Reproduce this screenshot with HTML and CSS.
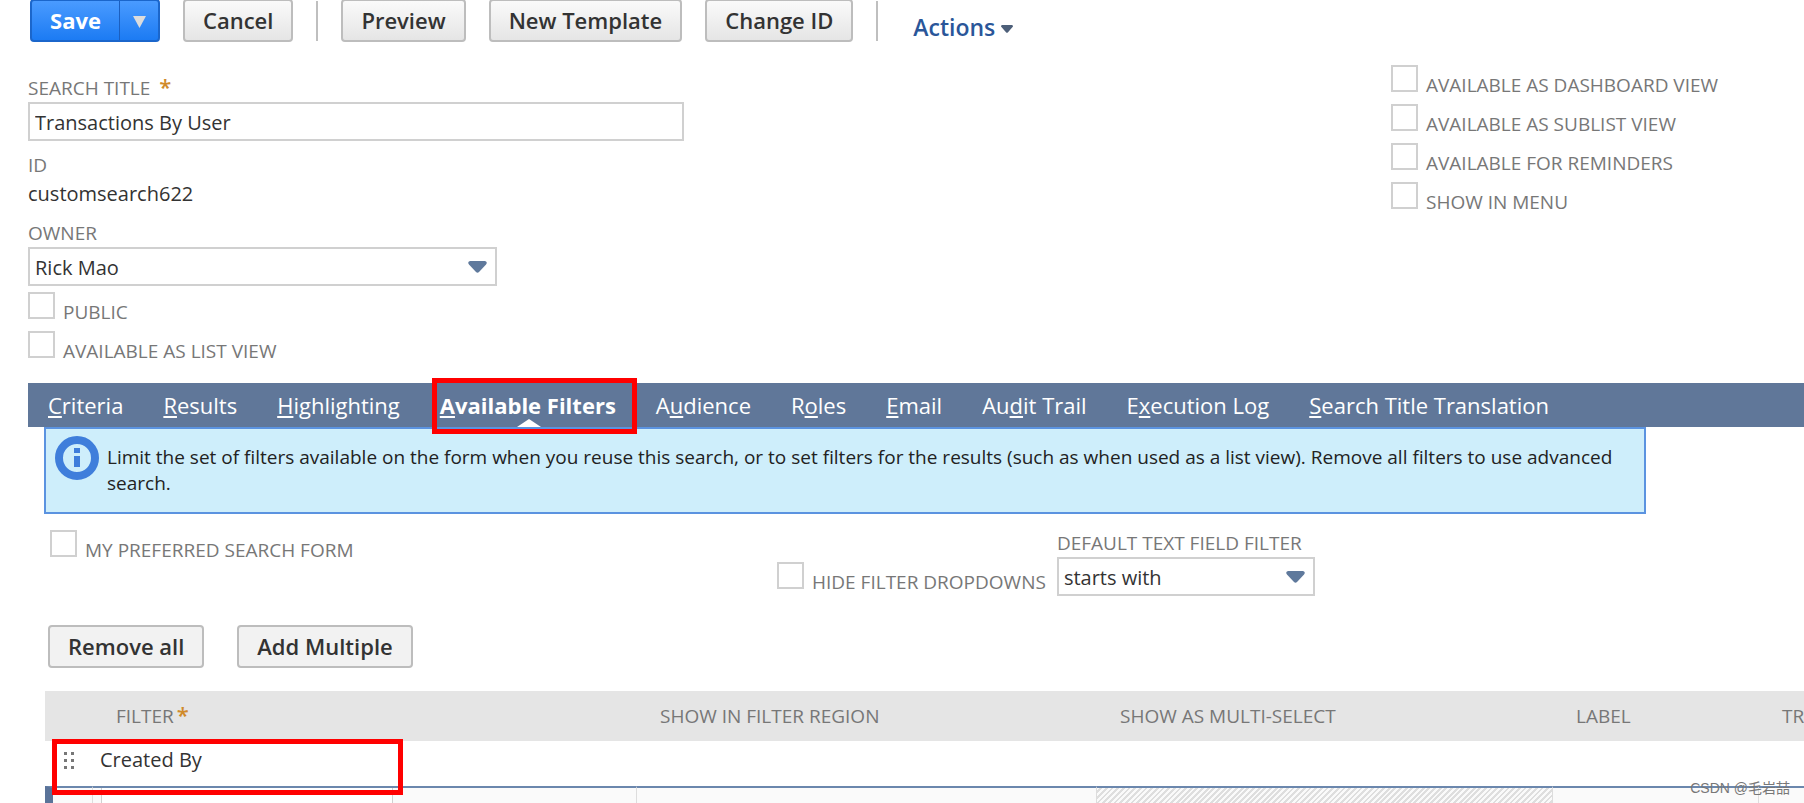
FILE: index.html
```html
<!DOCTYPE html>
<html lang="en">
<head>
    <meta charset="UTF-8">
    <meta name="viewport" content="width=device-width, initial-scale=1.0">
    <title>Saved Transaction Search</title>
    <link rel="stylesheet" href="styles.css">
</head>
<body>
    <header class="toolbar">
        <div class="split">
            <button class="btn-save" type="button">Save</button>
            <button class="btn-more" type="button" aria-label="More save options">
                <svg width="13" height="14" viewBox="0 0 13 14"><path d="M0 1h13L6.500 13z" fill="#dcdcdc"/></svg>
            </button>
        </div>
        <button class="btn" type="button">Cancel</button>
        <span class="divider"></span>
        <button class="btn" type="button">Preview</button>
        <button class="btn" type="button">New Template</button>
        <button class="btn" type="button">Change ID</button>
        <span class="divider"></span>
        <a class="actions" href="#">Actions
            <svg width="12" height="8" viewBox="0 0 12 8"><path d="M1 0h10q1 0 1 1.500L6.800 7.400q-.8.8-1.600 0L0 1.500Q0 0 1 0z" fill="#4d5f79"/></svg>
        </a>
    </header>

    <main>
        <section class="fields">
            <div class="fields-left">
                <label class="label" for="title">SEARCH TITLE <span class="required title-star">*</span></label>
                <input class="box" type="text" id="title" value="Transactions By User">
                <div class="field">
                    <div class="label">ID</div>
                    <div class="value">customsearch622</div>
                </div>
                <div class="field">
                    <label class="label" for="owner">OWNER</label>
                    <div class="select owner">
                        <select class="box" id="owner"><option>Rick Mao</option></select>
                        <svg class="caret" width="19" height="12" viewBox="0 0 19 12"><path d="M2 0h15q3 1 1 3.500L11 11q-1.500 1.500-3 0L1 3.500Q-1 1 2 0z" fill="#5f799c"/></svg>
                    </div>
                </div>
                <div class="checks checks-left">
                    <div class="check"><input type="checkbox" id="public"><label for="public">PUBLIC</label></div>
                    <div class="check"><input type="checkbox" id="listview"><label for="listview">AVAILABLE AS LIST VIEW</label></div>
                </div>
            </div>
            <div class="checks">
                <div class="check"><input type="checkbox" id="dashboard"><label for="dashboard">AVAILABLE AS DASHBOARD VIEW</label></div>
                <div class="check"><input type="checkbox" id="sublist"><label for="sublist">AVAILABLE AS SUBLIST VIEW</label></div>
                <div class="check"><input type="checkbox" id="reminders"><label for="reminders">AVAILABLE FOR REMINDERS</label></div>
                <div class="check"><input type="checkbox" id="menu"><label for="menu">SHOW IN MENU</label></div>
            </div>
        </section>

        <nav class="tabs">
            <a href="#"><u>C</u>riteria</a>
            <a href="#"><u>R</u>esults</a>
            <a href="#"><u>H</u>ighlighting</a>
            <a class="active" href="#"><u>A</u>vailable Filters</a>
            <a href="#">A<u>u</u>dience</a>
            <a href="#">R<u>o</u>les</a>
            <a href="#"><u>E</u>mail</a>
            <a href="#">Au<u>d</u>it Trail</a>
            <a href="#">E<u>x</u>ecution Log</a>
            <a href="#"><u>S</u>earch Title Translation</a>
        </nav>

        <section class="panel">
            <div class="info">
                <svg class="info-icon" width="44" height="44" viewBox="0 0 44 44">
                    <circle cx="22" cy="22" r="18" fill="none" stroke="#3f7edb" stroke-width="8"/>
                    <path d="M19 12h6v5h-6zM19 20h6v11h-6z" fill="#3f7edb"/>
                </svg>
                <p>Limit the set of filters available on the form when you reuse this search, or to set filters for the results (such as when used as a list view). Remove all filters to use advanced search.</p>
            </div>

            <div class="options">
                <div class="check preferred"><input type="checkbox" id="preferred"><label for="preferred">MY PREFERRED SEARCH FORM</label></div>
                <div class="check hide"><input type="checkbox" id="hide"><label for="hide">HIDE FILTER DROPDOWNS</label></div>
                <div>
                    <label class="label" for="textfilter">DEFAULT TEXT FIELD FILTER</label>
                    <div class="select textfilter">
                        <select class="box" id="textfilter"><option>starts with</option></select>
                        <svg class="caret" width="19" height="12" viewBox="0 0 19 12"><path d="M2 0h15q3 1 1 3.500L11 11q-1.500 1.500-3 0L1 3.500Q-1 1 2 0z" fill="#5f799c"/></svg>
                    </div>
                </div>
            </div>

            <div class="list-buttons">
                <button class="btn flat" type="button">Remove all</button>
                <button class="btn flat" type="button">Add Multiple</button>
            </div>

            <table class="filters">
                <colgroup>
                    <col class="col-drag"><col class="col-filter"><col class="col-region"><col class="col-multi"><col class="col-label"><col>
                </colgroup>
                <thead>
                    <tr>
                        <th></th>
                        <th>FILTER<span class="required">*</span></th>
                        <th>SHOW IN FILTER REGION</th>
                        <th>SHOW AS MULTI-SELECT</th>
                        <th>LABEL</th>
                        <th>TR</th>
                    </tr>
                </thead>
                <tbody>
                    <tr class="row">
                        <td class="drag">
                            <svg width="11" height="18" viewBox="0 0 11 18" fill="#777"><path d="M0 0h3v3H0zM7 0h3v3H7zM0 7h3v3H0zM7 7h3v3H7zM0 14h3v3H0zM7 14h3v3H7z"/></svg>
                        </td>
                        <td>Created By<span class="mark-row"></span></td>
                        <td></td>
                        <td></td>
                        <td></td>
                        <td></td>
                    </tr>
                    <tr class="edit">
                        <td class="handle"></td>
                        <td><input type="text" aria-label="Filter"></td>
                        <td></td>
                        <td class="disabled"></td>
                        <td></td>
                        <td></td>
                    </tr>
                </tbody>
            </table>
        </section>
    </main>
    <div class="watermark">CSDN @毛岩喆</div>
</body>
</html>
```
FILE: styles.css
```css
* {
    margin: 0;
    padding: 0;
    box-sizing: border-box;
}
body {
    font-family: "Open Sans", "Noto Sans CJK SC", sans-serif;
    font-size: 19px;
    color: #333;
    background: #fff;
    height: 100vh;
    overflow: hidden;
    position: relative;
}
button, input, select {
    font-family: inherit;
}
main {
    padding-left: 28px;
}

/* toolbar */
.toolbar {
    display: flex;
    margin-top: -1px;
    padding-left: 30px;
    gap: 23px;
}
.split {
    display: flex;
    height: 43px;
    border: 2px solid #1b66cb;
    border-radius: 4px;
    background: linear-gradient(#4a9bff, #1c7bf3);
}
.btn-save, .btn-more {
    border: none;
    background: none;
    color: #fff;
    font-size: 22px;
    font-weight: 700;
    line-height: 39px;
}
.btn-save {
    width: 87px;
}
.btn-more {
    width: 39px;
    border-left: 1px solid #1b5fc0;
}
.btn {
    height: 43px;
    padding: 0 18px;
    border: 2px solid #bdbdbd;
    border-radius: 4px;
    background: linear-gradient(#fafafa, #e5e5e5);
    color: #333;
    font-size: 22px;
    font-weight: 600;
    line-height: 39px;
}
.flat {
    background: #f2f2f2;
}
.divider {
    width: 2px;
    height: 40px;
    margin-top: 2px;
    background: #bfbfbf;
}
.actions {
    margin-left: 12px;
    color: #2a5699;
    font-size: 23px;
    font-weight: 600;
    line-height: 56px;
    height: 43px;
    text-decoration: none;
}
.actions svg {
    vertical-align: 3px;
}

/* fields */
.fields {
    display: grid;
    grid-template-columns: 33fr 10fr;
    margin-top: 23px;
}
.fields-left {
    width: 656px;
    padding-top: 10px;
}
.label {
    display: block;
    line-height: 27px;
    color: #777;
    white-space: nowrap;
}
.required {
    color: #d08a2a;
    font-size: 22px;
    font-weight: 600;
    line-height: 20px;
}
.title-star {
    margin-left: 4px;
}
.box {
    display: block;
    width: 100%;
    height: 39px;
    padding: 2px 5px 0;
    border: 2px solid #d0d0d0;
    border-radius: 0;
    background: #fff;
    color: #333;
    font-size: 20px;
    appearance: none;
}
.field {
    margin-top: 11px;
}
.value {
    font-size: 20px;
    line-height: 30px;
}
.select {
    position: relative;
}
.caret {
    position: absolute;
    right: 10px;
    top: 14px;
}
.owner {
    width: 469px;
}
.checks {
    display: flex;
    flex-direction: column;
    gap: 6px;
}
.checks-left {
    margin-top: 6px;
}
.check {
    display: flex;
    align-items: baseline;
    gap: 8px;
    height: 33px;
    color: #777;
    line-height: 26px;
    white-space: nowrap;
}
.check input {
    appearance: none;
    width: 27px;
    height: 27px;
    border: 2px solid #d0d0d0;
    background: #fff;
}

/* tabs */
.tabs {
    display: flex;
    gap: 40px;
    height: 44px;
    margin-top: 19px;
    padding-left: 20px;
    background: #607799;
}
.tabs a {
    position: relative;
    color: #fff;
    font-size: 22px;
    line-height: 45px;
    text-decoration: none;
    white-space: nowrap;
}
.tabs .active {
    font-weight: 700;
}
/* pointer under the open tab */
.active::before {
    content: "";
    position: absolute;
    left: 50%;
    bottom: 0;
    margin-left: -11px;
    border: 12px solid transparent;
    border-top: none;
    border-bottom: 8px solid #fff;
}
.active::after {
    content: "";
    position: absolute;
    left: -8px;
    right: -21px;
    top: -5px;
    bottom: -7px;
    z-index: 1;
    border: 5px solid #f00;
}

/* panel */
.panel {
    padding-left: 16px;
}
.info {
    display: flex;
    gap: 8px;
    height: 87px;
    margin-right: 158px;
    padding: 7px 24px 0 9px;
    border: 2px solid #5b93e0;
    background: #ceeefb;
    color: #222;
}
.info-icon {
    flex: none;
}
.info p {
    padding-top: 8px;
    font-size: 19px;
    line-height: 26px;
}
.options {
    display: flex;
    gap: 11px;
    margin-top: 16px;
    padding-left: 6px;
}
.preferred {
    width: 716px;
}
.hide {
    margin-top: 32px;
}
.textfilter {
    width: 258px;
}
.list-buttons {
    display: flex;
    gap: 33px;
    margin: 29px 0 23px;
    padding-left: 4px;
}
.filters {
    width: 100%;
    margin-left: 1px;
    border-spacing: 0;
    table-layout: fixed;
}
.col-drag {
    width: 47px;
}
.col-filter {
    width: 544px;
}
.col-region {
    width: 460px;
}
.col-multi {
    width: 456px;
}
.col-label {
    width: 206px;
}
.filters th {
    height: 50px;
    padding-left: 24px;
    background: #e5e5e5;
    color: #777;
    font-weight: 400;
    text-align: left;
    white-space: nowrap;
}
.filters th .required {
    margin-left: 3px;
}
.row td {
    position: relative;
    height: 45px;
    padding: 5px 0 0 8px;
    font-size: 20px;
    line-height: 28px;
    vertical-align: top;
}
.row .drag {
    padding: 8px 0 0 19px;
}
.mark-row {
    position: absolute;
    left: -40px;
    top: -2px;
    width: 351px;
    height: 56px;
    z-index: 1;
    border: 5px solid #f00;
}
.edit td {
    height: 44px;
    padding-left: 8px;
    border-top: 2px solid #6b87ad;
    border-left: 1px solid #ddd;
    background: #fafafa;
}
.edit .handle {
    border-left: 8px solid #5a7399;
}
.edit input {
    display: block;
    width: 292px;
    height: 44px;
    border: 1px solid #d0d0d0;
    border-width: 0 1px;
    background: #fff;
}
.edit .disabled {
    background: repeating-linear-gradient(135deg, #fafafa 0 2px, #dedede 2px 4px);
}
.watermark {
    position: absolute;
    right: 14px;
    bottom: 6px;
    z-index: 2;
    color: #777;
    font-family: "Liberation Sans", "Noto Sans CJK SC", sans-serif;
    font-size: 14px;
}
```
